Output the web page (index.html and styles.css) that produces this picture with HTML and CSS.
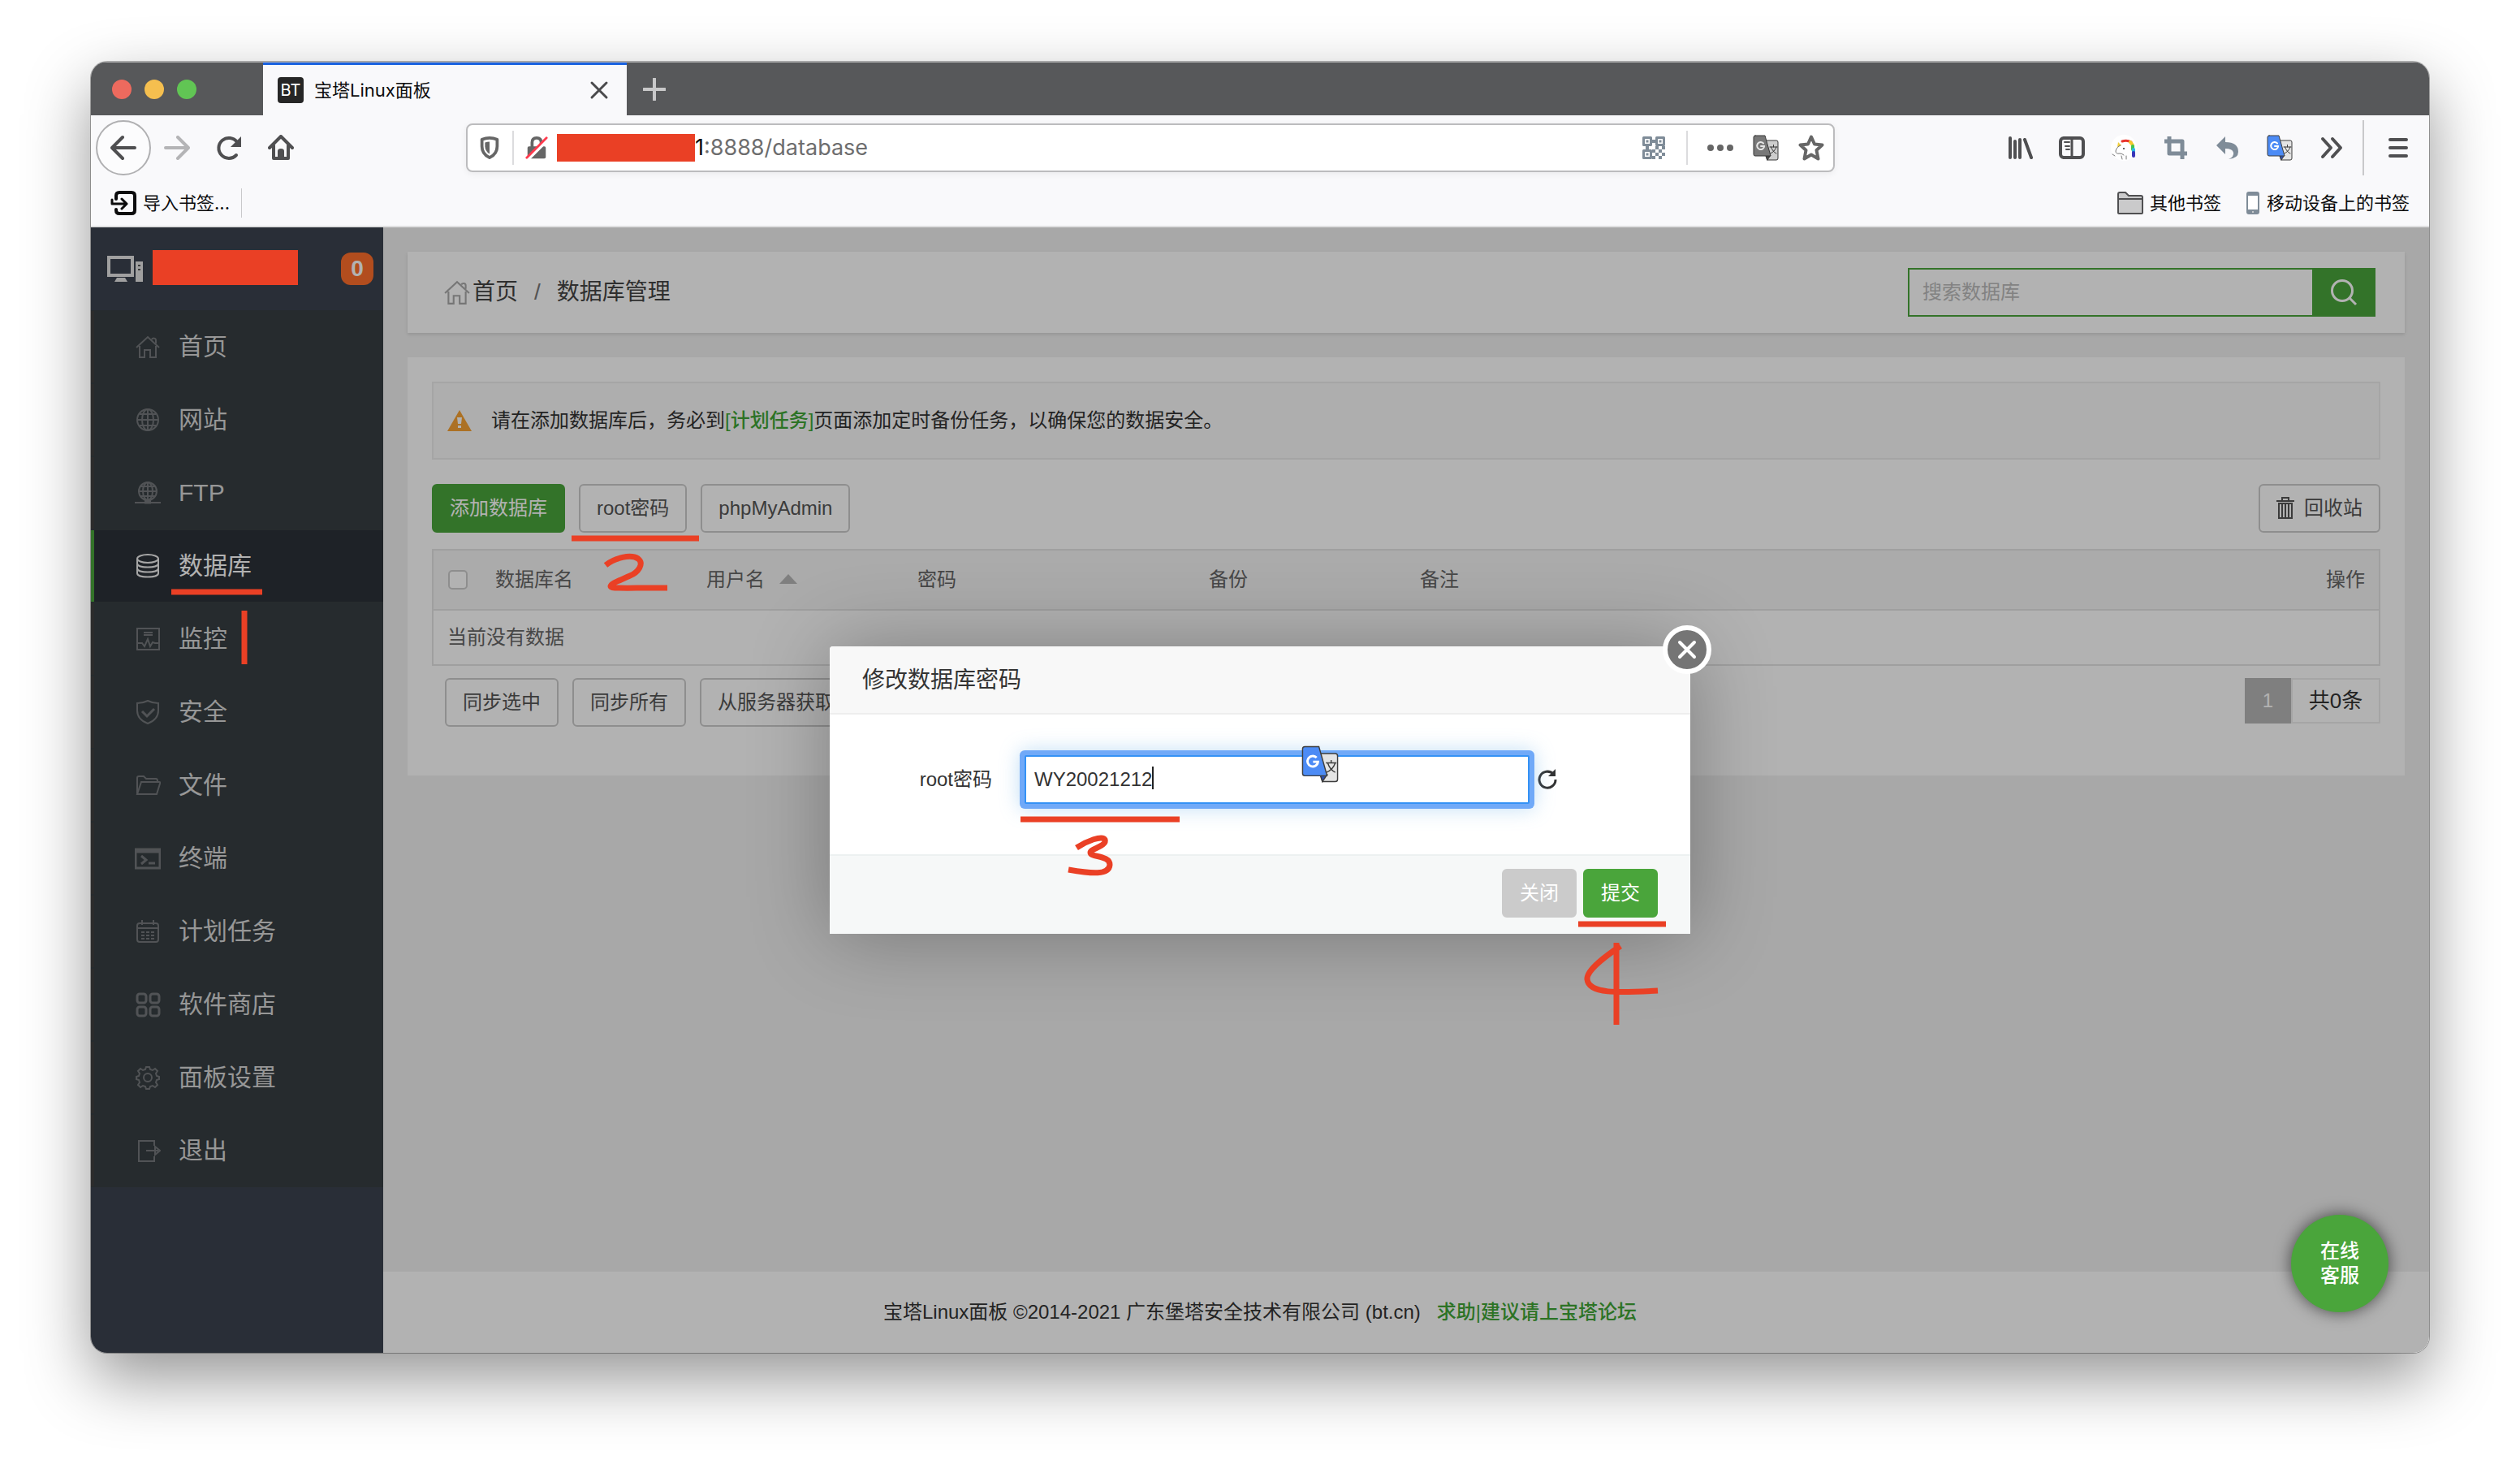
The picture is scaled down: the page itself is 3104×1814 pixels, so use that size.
FILE: index.html
```html
<!DOCTYPE html>
<html lang="zh-CN">
<head>
    <meta charset="UTF-8">
    <meta name="viewport" content="width=device-width, initial-scale=1.0">
    <title>宝塔Linux面板</title>
    <link rel="stylesheet" href="styles.css">
</head>
<body>
    <!-- shared icons -->
    <svg class="sprite" width="0" height="0" aria-hidden="true">
        <symbol id="i-home" viewBox="0 0 32 32">
            <path d="M2 17L16 4l14 13M6 15v14h6v-9h7v9h7V15M21 7c1-2 5-2 5 1v4"/>
        </symbol>
        <symbol id="i-translate" viewBox="0 0 32 32">
            <path class="tr-back" d="M13 7h16q2 0 2 2v20q0 2-2 2H18z"/>
            <path class="tr-line" d="M21 15h9M25.500 12.500V15M29 15q-2 6-7.500 8M22.500 15q2 6 6.500 8"/>
            <path class="tr-fold" d="M16 25h6l-4 6z"/>
            <path class="tr-front" d="M3 1h12l7 25H3q-2 0-2-2V3q0-2 2-2z"/>
            <path class="tr-g" d="M13 10.500a4.500 4.500 0 1 0 1.200 3.500H10"/>
        </symbol>
    </svg>

    <div class="window">
        <div class="tabs">
            <div class="lights"><i class="red"></i><i class="yellow"></i><i class="green"></i></div>
            <div class="tab">
                <span class="favicon">BT</span>
                <span class="tab-title">宝塔Linux面板</span>
                <button class="plain" aria-label="关闭标签页">
                    <svg width="24" height="24" viewBox="0 0 24 24"><path d="M3 3l18 18M21 3L3 21" stroke="#4a4a4c" stroke-width="3" stroke-linecap="round"/></svg>
                </button>
            </div>
            <button class="plain new-tab" aria-label="新标签页">
                <svg width="28" height="28" viewBox="0 0 28 28"><path d="M14 1v26M1 14h26" stroke="#c8c8c9" stroke-width="4" stroke-linecap="round"/></svg>
            </button>
        </div>

        <div class="toolbar">
            <button class="plain back" aria-label="后退">
                <svg class="ic" viewBox="0 0 32 32"><path d="M30 16H3M15 3L2 16l13 13"/></svg>
            </button>
            <div class="nav-group">
                <button class="plain off" aria-label="前进">
                    <svg class="ic" viewBox="0 0 32 32"><path d="M2 16h27M17 3l13 13-13 13"/></svg>
                </button>
                <button class="plain" aria-label="刷新">
                    <svg class="ic" viewBox="0 0 32 32"><path d="M25 25a12.500 12.500 0 1 1 1-16"/><path class="fill" d="M31 2v13H18z"/></svg>
                </button>
                <button class="plain" aria-label="主页">
                    <svg class="ic" viewBox="0 0 32 32"><path d="M2 16L16 2l14 14M7 13v16h18V13"/><path class="fill" d="M12 29v-9q0-3 4-3t4 3v9z"/></svg>
                </button>
            </div>
            <div class="urlbar">
                <svg class="ic small" viewBox="0 0 32 32"><path d="M6 5q10-4 20 0v9q0 10-10 15Q6 24 6 14z"/><path class="fill" d="M16 8q-3 0-6 1v5q0 6 6 10z"/></svg>
                <span class="sep"></span>
                <svg class="ic small" viewBox="0 0 32 32"><path d="M10 15V9q0-6 6-6t6 6v6"/><path class="fill" d="M6 14h20q2 0 2 2v12q0 2-2 2H6q-2 0-2-2V16q0-2 2-2z"/><path class="strike-gap" d="M5 31L31 5"/><path class="strike" d="M3 29L29 3"/></svg>
                <span class="masked"></span>
                <span class="ip">1</span>
                <input class="address" type="text" aria-label="地址" value=":8888/database">
                <svg class="ic" viewBox="0 0 32 32">
                    <g stroke="#7f8c98" stroke-width="3"><path d="M3.500 3.500h9v9h-9zM19.500 3.500h9v9h-9zM3.500 19.500h9v9h-9z"/></g>
                    <path fill="#7f8c98" stroke="none" d="M6.500 6.500h3v3h-3zM22.500 6.500h3v3h-3zM6.500 22.500h3v3h-3zM14 6h4v4h-4zM6 14h4v4H6zM18 14h4v4h-4zM26 14h4v4h-4zM14 18h4v4h-4zM22 18h4v4h-4zM18 22h4v4h-4zM26 22h4v4h-4zM14 26h4v4h-4zM22 26h4v4h-4z"/>
                </svg>
                <span class="sep right"></span>
                <div class="page-actions">
                    <svg class="ic" viewBox="0 0 32 32"><g class="fill"><circle cx="4" cy="16" r="4"/><circle cx="16" cy="16" r="4"/><circle cx="28" cy="16" r="4"/></g></svg>
                    <svg class="ic tr gray"><use href="#i-translate"/></svg>
                    <svg class="ic star" viewBox="0 0 32 32"><path d="M16 2.500l4 9 9.500 1-7 6.500 2 10.500-8.500-5-8.500 5 2-10.500-7-6.500 9.500-1z"/></svg>
                </div>
            </div>
            <div class="nav-group">
                <svg class="ic" viewBox="0 0 32 32"><path d="M4 4v24M10 8v20M16 6v22M22 6l8 22"/></svg>
                <svg class="ic" viewBox="0 0 32 32"><rect x="2" y="4" width="28" height="24" rx="4"/><path d="M16 4v24" stroke-width="3"/><path d="M7 9h6M8 14h5M9 18h4" stroke-width="2"/></svg>
                <svg class="ic" viewBox="0 0 32 32">
                    <circle cx="16" cy="16" r="16" fill="#fff" stroke="none"/>
                    <path d="M14 8q6-2 11 1" stroke="#e8352c" stroke-width="3"/><path d="M24 9q3 3 3 5" stroke="#f5c92e"/><path d="M27 14v4" stroke="#3fc44d"/><path d="M28 18v4" stroke="#2bb8e8"/><path d="M28 22v4" stroke="#3a35b8"/>
                    <path d="M8 15l1-6 4 4z" fill="#f2cf3a" stroke="none"/><path d="M12 13q-5 2-6 7 0 4 5 3 3 0 5 2M14 30l-1-4M19 30v-4M2 24l3 2" stroke="#777" stroke-width="1"/><circle cx="16" cy="17" r="1" fill="#333" stroke="none"/>
                </svg>
                <svg class="ic" viewBox="0 0 32 32"><path d="M8 2v21h22M2 8h22v22" stroke="#7f8c98" stroke-width="5" stroke-linecap="butt"/></svg>
                <svg class="ic" viewBox="0 0 32 32"><path d="M13 2v7q16 0 16 12 0 8-12 9 7-3 6-8t-10-5v7L2 13z" fill="#7f8c98" stroke="none"/></svg>
                <svg class="ic tr"><use href="#i-translate"/></svg>
                <svg class="ic" viewBox="0 0 32 32"><path d="M5 5l10 11L5 27M17 5l10 11-10 11"/></svg>
            </div>
            <span class="bar-sep"></span>
            <button class="plain" aria-label="菜单">
                <svg class="ic" viewBox="0 0 32 32"><path d="M6 6h20M6 16h20M6 26h20"/></svg>
            </button>
        </div>

        <div class="bookmarks">
            <a href="#" class="import">
                <svg class="ic black" viewBox="0 0 32 32"><path d="M7 11V7q0-4 4-4h15q4 0 4 4v18q0 4-4 4H11q-4 0-4-4v-1"/><path d="M2 12v5h17M14 11l6 6-6 6" stroke-width="3"/></svg>
                导入书签...
            </a>
            <a href="#" class="others">
                <svg class="ic" viewBox="0 0 32 32"><path d="M1 28V5q0-2 2-2h7l4 4h15q2 0 2 2v19q0 1-2 1H3q-2 0-2-1z" fill="#cacacb" stroke-width="2"/><path d="M2 11h28" stroke-width="2"/></svg>
                其他书签
            </a>
            <a href="#" class="mobile">
                <svg width="18" height="30" viewBox="0 0 18 30"><rect x="1" y="1" width="16" height="28" rx="3" fill="#7f8c98"/><path fill="#fff" d="M3 6h12v17H3z"/><circle cx="9" cy="26" r="1" fill="#ddd"/></svg>
                移动设备上的书签
            </a>
        </div>

        <div class="view">
            <nav class="sidebar">
                <div class="host">
                    <svg width="44" height="34" viewBox="0 0 44 34"><path d="M2 3h29v22H2z" fill="none" stroke="#e6e6e6" stroke-width="4"/><path fill="#e6e6e6" d="M12 28h10l3 5H9zM35 8h9v25h-9z"/><path d="M38 13h3M38 18h3" stroke="#555" stroke-width="2"/></svg>
                    <span class="badge">0</span>
                </div>
                <ul class="menu">
                    <li><a href="#"><svg><use href="#i-home"/></svg>首页</a></li>
                    <li><a href="#"><svg viewBox="0 0 32 32"><circle cx="16" cy="16" r="13"/><ellipse cx="16" cy="16" rx="7" ry="13"/><path d="M16 3v26M3 16h26M6 9h20M6 23h20"/></svg>网站</a></li>
                    <li><a href="#"><svg viewBox="0 0 32 32"><circle cx="16" cy="14" r="11"/><ellipse cx="16" cy="14" rx="6" ry="11"/><path d="M16 3v22M5 14h22M7 8h18M7 20h18M0 28h32"/><path d="M12 27h8" stroke-width="5"/></svg>FTP</a></li>
                    <li><a href="#" class="active"><svg viewBox="0 0 32 32"><ellipse cx="16" cy="7" rx="13" ry="5"/><path d="M3 7v18c0 6 26 6 26 0V7M3 13c0 6 26 6 26 0M3 19c0 6 26 6 26 0"/></svg>数据库</a></li>
                    <li><a href="#"><svg viewBox="0 0 32 32"><path d="M3 3h27v26H3zM11 8h11M11 11h11M3 21h6l3 4 4-9 3 9 3-5 3 1h5"/></svg>监控</a></li>
                    <li><a href="#"><svg viewBox="0 0 32 32"><path d="M16 2q6 3 13 3v9q0 11-13 16Q3 25 3 14V5q7 0 13-3z"/><path d="M9 15l6 6 9-9" stroke-width="3"/></svg>安全</a></li>
                    <li><a href="#"><svg viewBox="0 0 32 32"><path d="M3 27V7q0-2 2-2h6l3 3h12q2 0 2 3M3 27l5-15h22q2 0 1 2l-4 13H3z"/></svg>文件</a></li>
                    <li><a href="#"><svg viewBox="0 0 32 32"><path d="M1 5h30v23H1z" stroke-width="3"/><path d="M2 7h28" stroke-width="5"/><path d="M8 13l6 5-6 5M17 22h8" stroke-width="3"/></svg>终端</a></li>
                    <li><a href="#"><svg viewBox="0 0 32 32"><rect x="3" y="6" width="26" height="23" rx="3"/><path d="M9 2v6M23 2v6M3 12h26"/><path d="M8 17h17M8 21h17M8 25h17" stroke-dasharray="4 2"/></svg>计划任务</a></li>
                    <li><a href="#"><svg viewBox="0 0 32 32"><g stroke-width="3"><rect x="3" y="3" width="11" height="11" rx="3"/><rect x="19" y="3" width="11" height="11" rx="3"/><rect x="3" y="19" width="11" height="11" rx="3"/><rect x="19" y="19" width="11" height="11" rx="3"/></g></svg>软件商店</a></li>
                    <li><a href="#"><svg viewBox="0 0 32 32"><circle cx="16" cy="16" r="5"/><path d="M13 6l1-3h4l1 3 3 1 3-2 3 3-2 3 1 3 3 1v3l-3 1-1 3 2 3-3 3-3-2-3 1-1 3h-4l-1-3-3-1-3 2-3-3 2-3-1-3-3-1v-3l3-1 1-3-2-3 3-3 3 2z"/></svg>面板设置</a></li>
                    <li><a href="#"><svg viewBox="0 0 32 32"><path d="M24 10V4H5v25h19v-6M14 16h15"/><path d="M25 11l6 5-6 5z"/></svg>退出</a></li>
                </ul>
            </nav>

            <main class="main">
                <div class="crumbs">
                    <svg class="crumb-home"><use href="#i-home"/></svg>
                    <a href="#">首页</a><span class="slash">/</span><span>数据库管理</span>
                    <form class="search">
                        <input type="text" placeholder="搜索数据库" aria-label="搜索数据库">
                        <button type="button" aria-label="搜索">
                            <svg width="34" height="34" viewBox="0 0 34 34"><circle cx="15" cy="15" r="12.500"/><path d="M24 24l8 8"/></svg>
                        </button>
                    </form>
                </div>

                <div class="card">
                    <div class="tip">
                        <svg width="30" height="26" viewBox="0 0 30 26"><path d="M15 0l15 26H0z" fill="#f7a234"/><path d="M12 9h6l-1 8h-4zM13 19h4v3h-4z" fill="#fff"/></svg>
                        <p>请在添加数据库后，务必到<a href="#">[计划任务]</a>页面添加定时备份任务，以确保您的数据安全。</p>
                    </div>
                    <div class="row">
                        <button class="btn primary">添加数据库</button>
                        <button class="btn">root密码</button>
                        <button class="btn">phpMyAdmin</button>
                        <button class="btn recycle">
                            <svg width="22" height="28" viewBox="0 0 22 28"><path d="M0 5h22M7 4V1h8v3M3 8v18h16V8zM7 9v16M11 9v16M15 9v16" fill="none" stroke="#555" stroke-width="2"/></svg>
                            回收站
                        </button>
                    </div>
                    <table>
                        <colgroup><col class="c-check"><col class="c-name"><col class="c-name"><col class="c-pass"><col class="c-name"><col></colgroup>
                        <thead>
                            <tr>
                                <th class="check"><input type="checkbox" aria-label="全选"></th>
                                <th>数据库名</th>
                                <th>用户名<i class="sort"></i></th>
                                <th>密码</th>
                                <th>备份</th>
                                <th class="note">备注<span>操作</span></th>
                            </tr>
                        </thead>
                        <tbody>
                            <tr><td colspan="6">当前没有数据</td></tr>
                        </tbody>
                    </table>
                    <div class="row foot">
                        <button class="btn">同步选中</button>
                        <button class="btn">同步所有</button>
                        <button class="btn">从服务器获取</button>
                        <div class="pages"><span class="cur">1</span><span class="total">共0条</span></div>
                    </div>
                </div>

                <footer>
                    <span>宝塔Linux面板 ©2014-2021 广东堡塔安全技术有限公司 (bt.cn)</span>
                    <a href="#">求助|建议请上宝塔论坛</a>
                </footer>
            </main>

            <div class="shade">
                <div class="modal" role="dialog" aria-labelledby="modal-title">
                    <h2 id="modal-title">修改数据库密码</h2>
                    <div class="modal-body">
                        <label for="root-pass">root密码</label>
                        <div class="field">
                            <input id="root-pass" type="text" value="WY20021212">
                            <i class="caret"></i>
                            <svg class="tr float-tr"><use href="#i-translate"/></svg>
                        </div>
                        <button class="plain refresh" aria-label="随机密码">
                            <svg width="24" height="26" viewBox="0 0 24 26"><path d="M19 6a10 10 0 1 0 3 7" fill="none" stroke="#333" stroke-width="3"/><path d="M22 0v9h-9z" fill="#333"/></svg>
                        </button>
                    </div>
                    <div class="modal-foot">
                        <button class="btn cancel">关闭</button>
                        <button class="btn submit">提交</button>
                    </div>
                    <button class="plain close" aria-label="关闭">
                        <svg width="24" height="24" viewBox="0 0 24 24"><path d="M3 3l18 18M21 3L3 21" stroke="#fff" stroke-width="4" stroke-linecap="round"/></svg>
                    </button>
                </div>
            </div>

            <button class="service">在线<br>客服</button>
        </div>
    </div>

    <!-- red pen marks -->
    <svg class="marks" aria-hidden="true">
        <path class="block" d="M188 308h179v43H188z"/>
        <path d="M211 729h112M301 752v66M704 663h157M1257 1009h196M1944 1138h108"/>
        <path d="M746 696C757 687 777 682 786 688C794 694 786 705 776 709C763 715 753 718 752 722C752 725 758 724 822 724"/>
        <path d="M1326 1044C1338 1036 1358 1028 1361 1034C1364 1042 1343 1045 1343 1050C1343 1056 1367 1053 1367 1065C1366 1078 1345 1076 1316 1071"/>
        <path d="M1996 1165C1980 1176 1954 1194 1955 1206C1957 1224 1992 1223 2042 1220M1991 1161v101"/>
    </svg>
</body>
</html>
```
FILE: styles.css
```css
*{
    box-sizing: border-box;
    }
body{
    margin: 0;
    min-height: 100vh;
    padding: 76px 112px 148px;
    display: flex;
    flex-direction: column;
    background: #fff;
    color: #333;
    font: 24px/34px "Liberation Sans", "Noto Sans CJK SC", sans-serif;
    }
a{
    color: inherit;
    text-decoration: none;
    }
svg{
    flex: none;
    fill: none;
    }
button, input{
    font: inherit;
    }
.sprite{
    position: absolute;
    }
.plain{
    display: flex;
    padding: 0;
    border: 0;
    background: none;
    }

/* browser window */
.window{
    flex: 1;
    display: flex;
    flex-direction: column;
    border-radius: 20px;
    overflow: hidden;
    box-shadow: 0 0 0 1px rgba(0,0,0,.3), 0 32px 80px rgba(0,0,0,.42);
    }
.tabs{
    display: flex;
    align-items: stretch;
    height: 66px;
    background: #57585a;
    border-top: 1px solid #b4b4b5;
    font-family: Inter, "Noto Sans CJK SC", sans-serif;
    font-size: 22px;
    }
.lights{
    display: flex;
    align-items: center;
    gap: 16px;
    width: 212px;
    padding-left: 26px;
    }
.lights i{
    width: 24px;
    height: 24px;
    border-radius: 50%;
    }
.lights .red{ background: #ed6a5e; }
.lights .yellow{ background: #f5bf4f; }
.lights .green{ background: #61c554; }
.tab{
    display: flex;
    align-items: center;
    width: 448px;
    padding: 0 22px 0 18px;
    border-top: 3px solid #1a62e0;
    background: #f9f9fb;
    color: #0c0c0d;
    }
.favicon{
    width: 32px;
    height: 32px;
    margin-right: 13px;
    border-radius: 4px;
    background: #262626;
    color: #fff;
    font-size: 20px;
    line-height: 32px;
    text-align: center;
    }
.tab-title{
    flex: 1;
    }
.new-tab{
    align-items: center;
    margin-left: 20px;
    }

.toolbar{
    display: flex;
    align-items: center;
    height: 80px;
    padding: 0 22px 0 6px;
    background: #f9f9fb;
    }
.ic{
    display: block;
    width: 32px;
    height: 32px;
    stroke: #4f4f51;
    stroke-width: 4;
    stroke-linecap: round;
    stroke-linejoin: round;
    }
.ic .fill{
    fill: #4f4f51;
    stroke: none;
    }
.ic.small{
    width: 30px;
    height: 30px;
    }
.off{
    opacity: .4;
    }
.back{
    align-items: center;
    justify-content: center;
    width: 68px;
    height: 68px;
    margin-right: 16px;
    border: 2px solid #b0b0b2;
    border-radius: 50%;
    background: #fcfcfd;
    }
.nav-group{
    display: flex;
    gap: 32px;
    }
.bar-sep{
    width: 2px;
    height: 68px;
    margin: 0 26px 0 22px;
    background: #c9c9cb;
    }
.urlbar{
    flex: 1;
    display: flex;
    align-items: center;
    min-width: 0;
    height: 60px;
    margin: 0 212px;
    padding: 0 11px 0 12px;
    border: 2px solid #bcbcbe;
    border-radius: 8px;
    background: #fff;
    box-shadow: 0 2px 8px rgba(0,0,0,.06);
    font: 27px/34px Inter, sans-serif;
    }
.sep{
    width: 2px;
    height: 42px;
    margin: 0 13px;
    background: #dcdcde;
    }
.sep.right{
    margin: 0 24px;
    }
.strike-gap{
    stroke: #fff;
    }
.strike{
    stroke: #ff3b4e;
    stroke-width: 3;
    }
.masked{
    width: 170px;
    height: 34px;
    margin-left: 10px;
    background: #ea4025;
    }
.ip{
    color: #0c0c0d;
    }
.address{
    flex: 1;
    min-width: 0;
    padding: 0;
    border: 0;
    outline: 0;
    color: #6d6d6e;
    background: none;
    }
.page-actions{
    display: flex;
    gap: 24px;
    }
.urlbar .ic{
    stroke: #666;
    }
.urlbar .fill{
    fill: #666;
    }
.ic.tr, .tr{
    stroke: #3d3d3d;
    stroke-width: 1;
    }
.tr-back{ fill: #e4e4e4; }
.tr-line{ fill: none; }
.tr-fold{ fill: #2f4fae; }
.tr-front{ fill: #4c8bf5; }
.tr-g{
    fill: none;
    stroke: #fff;
    stroke-width: 2;
    }
.gray{
    filter: grayscale(1) brightness(.9);
    }

.bookmarks{
    display: flex;
    align-items: center;
    height: 58px;
    padding: 0 24px;
    border-bottom: 2px solid #e0e0e1;
    background: #f9f9fb;
    color: #0c0c0d;
    font: 22px/36px Inter, "Noto Sans CJK SC", sans-serif;
    }
.bookmarks a{
    display: flex;
    align-items: center;
    gap: 8px;
    }
.import{
    padding-right: 14px;
    border-right: 1px solid #c9c9cb;
    }
.black{
    stroke: #0c0c0d;
    }
.others{
    margin-left: auto;
    margin-right: 30px;
    }

/* panel */
.view{
    position: relative;
    flex: 1;
    display: flex;
    background: #f1f1f1;
    }
.sidebar{
    flex: none;
    width: 360px;
    background: #3c424f;
    }
.host{
    display: flex;
    align-items: center;
    justify-content: space-between;
    height: 102px;
    padding: 0 12px 0 20px;
    }
.badge{
    width: 40px;
    height: 40px;
    border-radius: 12px;
    background: #ff6f2b;
    color: #fff;
    font-size: 28px;
    font-weight: bold;
    line-height: 40px;
    text-align: center;
    }
.menu{
    margin: 0;
    padding: 0;
    list-style: none;
    background: #373e42;
    font-size: 30px;
    }
.menu li{
    padding: 1px 0;
    }
.menu a{
    display: flex;
    align-items: center;
    gap: 22px;
    height: 88px;
    padding-left: 50px;
    border-left: 4px solid #404040;
    color: #d8d8d8;
    }
.menu svg{
    width: 32px;
    height: 32px;
    stroke: #74787b;
    stroke-width: 2;
    }
.menu .active{
    border-left-color: #4aa53b;
    background: #2c3138;
    color: #fff;
    }
.menu .active svg{
    stroke: #eee;
    }
.main{
    flex: 1;
    display: flex;
    flex-direction: column;
    min-width: 0;
    }
.crumbs{
    display: flex;
    align-items: center;
    height: 100px;
    margin: 30px 30px 0;
    padding: 0 36px 0 44px;
    background: #fff;
    box-shadow: 0 2px 4px rgba(0,0,0,.12);
    color: #444;
    font-size: 28px;
    }
.crumb-home{
    width: 34px;
    height: 34px;
    margin-right: 2px;
    stroke: #aaa;
    stroke-width: 2;
    }
.slash{
    margin: 0 20px;
    color: #777;
    }
.search{
    display: flex;
    width: 576px;
    height: 60px;
    margin-left: auto;
    font-size: 24px;
    }
.search input{
    flex: 1;
    min-width: 0;
    padding: 0 16px;
    border: 2px solid #4aa53b;
    border-right: 0;
    outline: 0;
    background: #fff;
    }
.search input::placeholder{
    color: #bbb;
    }
.search button{
    display: flex;
    align-items: center;
    justify-content: center;
    width: 78px;
    padding: 0;
    border: 0;
    background: #4aa53b;
    }
.search svg{
    stroke: #fff;
    stroke-width: 3;
    }

.card{
    margin: 30px 30px auto;
    padding: 30px 30px 60px;
    background: #fff;
    }
.tip{
    display: flex;
    align-items: center;
    height: 96px;
    padding-left: 17px;
    gap: 24px;
    border: 2px solid #ededed;
    background: #f9f9f9;
    }
.tip p{
    margin: 0;
    }
.tip a, footer a{
    color: #3fa535;
    font-weight: 500;
    }
.row{
    display: flex;
    gap: 17px;
    margin: 30px 0 20px;
    }
.btn{
    height: 60px;
    padding: 0 20px;
    border: 2px solid #ccc;
    border-radius: 6px;
    background: #fff;
    color: #555;
    white-space: nowrap;
    }
.primary, .submit{
    border-color: #4aa53b;
    background: #4aa53b;
    color: #fff;
    }
.recycle{
    display: flex;
    align-items: center;
    gap: 12px;
    margin-left: auto;
    }
table{
    width: 100%;
    table-layout: fixed;
    border-collapse: collapse;
    border: 2px solid #e4e4e4;
    color: #666;
    }
.c-check{ width: 58px; }
.c-name{ width: 260px; }
.c-pass{ width: 359px; }
th{
    height: 74px;
    padding: 0 17px 0 19px;
    border-bottom: 2px solid #e4e4e4;
    background: #f5f5f5;
    font-weight: normal;
    text-align: left;
    white-space: nowrap;
    }
td{
    height: 68px;
    padding: 0 17px;
    }
.check input{
    appearance: none;
    display: block;
    width: 24px;
    height: 24px;
    margin: 0;
    border: 2px solid #ccc;
    border-radius: 5px;
    background: #fff;
    }
th.check{
    padding: 0 0 0 18px;
    }
.note span{
    float: right;
    }
.sort{
    display: inline-block;
    margin-left: 18px;
    border: 11px solid transparent;
    border-top: 0;
    border-bottom: 12px solid #b7b7b7;
    vertical-align: 3px;
    }
.foot{
    margin: 15px 0 0 16px;
    }
.pages{
    display: flex;
    height: 56px;
    margin-left: auto;
    font-size: 26px;
    line-height: 52px;
    text-align: center;
    }
.cur{
    width: 57px;
    border: 2px solid #b7b7b7;
    background: #b7b7b7;
    color: #fff;
    font-size: 24px;
    }
.total{
    width: 110px;
    border: 2px solid #ececec;
    }
footer{
    display: flex;
    align-items: center;
    justify-content: center;
    gap: 20px;
    height: 100px;
    padding-right: 360px;
    background: #fff;
    }

/* dialog */
.shade{
    position: absolute;
    inset: 0;
    display: grid;
    place-items: center;
    background: rgba(0,0,0,.3);
    }
.modal{
    position: relative;
    width: 1060px;
    border-radius: 4px 4px 0 0;
    background: #fff;
    box-shadow: 2px 2px 100px rgba(0,0,0,.3);
    }
.modal h2{
    margin: 0;
    padding: 0 40px;
    height: 84px;
    border-bottom: 2px solid #eee;
    border-radius: 4px 4px 0 0;
    background: #f8f8f8;
    font-size: 28px;
    font-weight: normal;
    line-height: 84px;
    }
.modal-body{
    display: flex;
    align-items: center;
    padding: 50px 0 62px;
    }
.modal-body label{
    width: 240px;
    padding-right: 40px;
    text-align: right;
    }
.field{
    position: relative;
    }
.field input{
    display: block;
    width: 622px;
    height: 60px;
    padding: 0 10px;
    border: 2px solid #3592f5;
    border-radius: 2px;
    outline: 0;
    box-shadow: 0 0 0 6px #70a9f8, 0 0 24px 6px rgba(102,175,233,.4);
    color: #333;
    }
.caret{
    position: absolute;
    left: 157px;
    top: 14px;
    width: 2px;
    height: 28px;
    background: #222;
    }
.float-tr{
    position: absolute;
    left: 341px;
    top: -12px;
    width: 46px;
    height: 46px;
    }
.refresh{
    margin-left: 10px;
    }
.modal-foot{
    display: flex;
    justify-content: flex-end;
    gap: 8px;
    padding: 16px 40px 20px;
    border-top: 2px solid #edf1f1;
    background: #f6f8f8;
    }
.cancel{
    border-color: #cbcbcb;
    background: #cbcbcb;
    color: #fff;
    }
.close{
    position: absolute;
    top: -26px;
    right: -26px;
    align-items: center;
    justify-content: center;
    width: 60px;
    height: 60px;
    border: 6px solid #fff;
    border-radius: 50%;
    background: #757575;
    }
.service{
    position: absolute;
    right: 50px;
    bottom: 50px;
    width: 120px;
    height: 120px;
    border: 0;
    border-radius: 50%;
    background: #4aa53b;
    box-shadow: 0 0 20px rgba(0,0,0,.6);
    color: #fff;
    font-weight: 500;
    line-height: 30px;
    }
.marks{
    position: absolute;
    top: 0;
    left: 0;
    width: 100%;
    height: 100%;
    pointer-events: none;
    stroke: #ea4025;
    stroke-width: 7;
    }
.block{
    fill: #ea4025;
    stroke: none;
    }
```
